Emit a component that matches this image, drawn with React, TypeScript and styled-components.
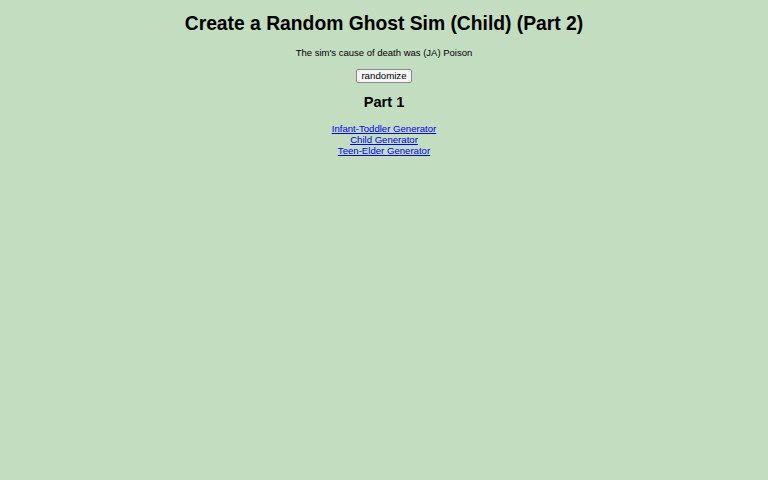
import { createGlobalStyle } from 'styled-components'
import styled from 'styled-components'

const GlobalStyle = createGlobalStyle`
  body {
    margin: 0;
    background: #c3ddc1;
    font-family: "Liberation Sans", Arial, sans-serif;
    color: #000;
  }
`

const Page = styled.div`
  display: flex;
  flex-direction: column;
  align-items: center;
  text-align: center;
  padding-top: 13px;
`

const Title = styled.h1`
  font-size: 19.3px;
  line-height: 22px;
  font-weight: bold;
  margin: 0 0 12px;
`

const Result = styled.p`
  font-size: 9.5px;
  line-height: 11px;
  margin: 0 0 11px;
`

const RandomButton = styled.button`
  font-family: "Liberation Sans", Arial, sans-serif;
  font-size: 9.7px;
  line-height: 12px;
  height: 14px;
  padding: 0 4px;
  background: #f5f5f5;
  border: 1px solid #8a8a8a;
  border-radius: 2px;
  color: #000;
  margin-bottom: 11px;
`

const Subtitle = styled.h2`
  font-size: 14.6px;
  line-height: 17px;
  font-weight: bold;
  margin: 0 0 12px;
`

const Links = styled.div`
  display: flex;
  flex-direction: column;
  font-size: 9.6px;
  line-height: 11px;
`

const Link = styled.a`
  color: #0000ee;
  text-decoration: underline;
`

const links = ['Infant-Toddler Generator', 'Child Generator', 'Teen-Elder Generator']

export default function App() {
  return (
    <>
      <GlobalStyle />
      <Page>
        <Title>Create a Random Ghost Sim (Child) (Part 2)</Title>
        <Result>The sim's cause of death was (JA) Poison</Result>
        <RandomButton>randomize</RandomButton>
        <Subtitle>Part 1</Subtitle>
        <Links>
          {links.map((l) => (
            <Link key={l} href="#">
              {l}
            </Link>
          ))}
        </Links>
      </Page>
    </>
  )
}
